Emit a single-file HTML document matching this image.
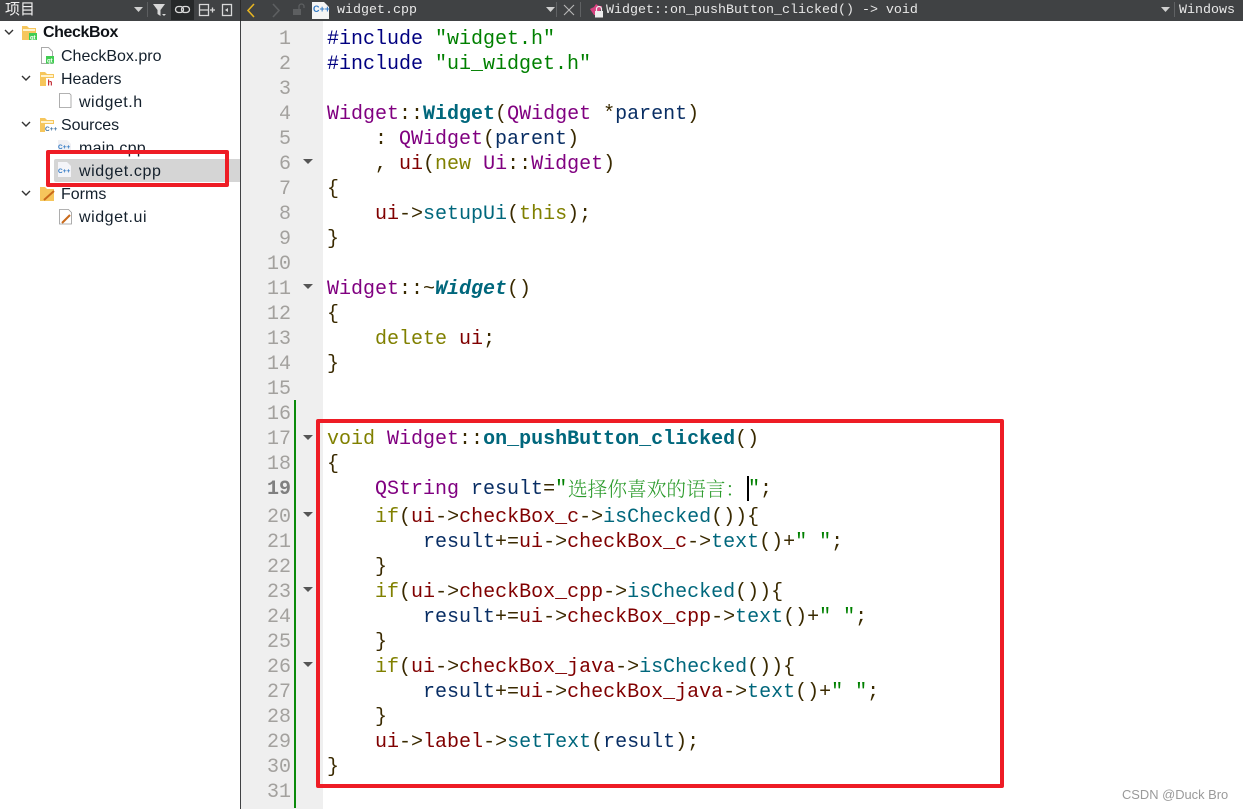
<!DOCTYPE html>
<html><head><meta charset="utf-8">
<style>
html,body{margin:0;padding:0;width:1243px;height:809px;overflow:hidden;background:#fff}
#r{position:relative;width:1243px;height:809px;overflow:hidden}
.a{position:absolute}
.t{position:absolute;font:16px/22px "Liberation Sans","Noto Sans CJK SC",sans-serif;color:#14202c;white-space:pre;margin-top:3px}
.h{position:absolute;font:13.33px/21px "Liberation Mono",monospace;color:#e8e8e8;white-space:pre;top:0}
.n{position:absolute;left:250px;width:41px;text-align:right;font:20px/25px "Liberation Mono",monospace;color:#a3a19e;margin-top:1px}
.c{position:absolute;left:327px;font:20px/25px "Liberation Mono","Noto Sans CJK SC",monospace;color:#3a2a00;white-space:pre;margin-top:1px}
.k{color:#808000}.p{color:#800080}.f{color:#00677c}.b{font-weight:bold}.s{color:#008000}.d{color:#000080}.v{color:#092e64}.m{color:#800000}
.fold{position:absolute;left:303px;width:0;height:0;border-left:5px solid transparent;border-right:5px solid transparent;border-top:5px solid #555}
svg{position:absolute;overflow:visible}
</style></head><body><div id="r">
<div class="a" style="left:0;top:0;width:1243px;height:21px;background:#404244"></div>
<div class="a" style="left:171px;top:0;width:23px;height:20px;background:#262829"></div>
<div class="a" style="left:147px;top:2px;width:1px;height:15px;background:#5c5e60"></div>
<div class="a" style="left:240px;top:0;width:1px;height:21px;background:#2a2a2a"></div>
<div class="a" style="left:556px;top:2px;width:1px;height:15px;background:#606264"></div>
<div class="a" style="left:580px;top:2px;width:1px;height:15px;background:#606264"></div>
<div class="a" style="left:1174px;top:2px;width:1px;height:15px;background:#606264"></div>
<div class="t" style="left:5px;top:-1px;margin-top:0;color:#f0f0f0;font-size:15px;line-height:21px">项目</div>
<svg style="left:0;top:0" width="1243" height="21">
<path d="M134 7h9l-4.500 5z" fill="#d0d0d0"/>
<path d="M153 4h12l-4.500 6v6l-3-2v-4z" fill="#d8d8d8"/><path d="M162 14h4l-2 2z" fill="#d8d8d8"/>
<g fill="none" stroke="#d8d8d8" stroke-width="1.300"><rect x="175.500" y="6.500" width="8" height="6" rx="3"/><rect x="181.500" y="6.500" width="8" height="6" rx="3"/>
<path d="M199.500 4.500h9v11h-9zM199.500 10h9M210 10h5M212.500 7.500v5"/><rect x="222.500" y="4.500" width="9" height="11"/></g>
<path d="M228 8l-3 2 3 2z" fill="#d8d8d8"/>
<path d="M254 4l-6 6.500 6 6.500" fill="none" stroke="#e6b422" stroke-width="1.600"/>
<path d="M273 4l6 6.500-6 6.500" fill="none" stroke="#5d5f61" stroke-width="1.600"/>
<rect x="293" y="9" width="8" height="6" fill="#5d5f61"/><path d="M299 9V6.500a2.500 2.500 0 0 1 5 0V8" fill="none" stroke="#5d5f61" stroke-width="1.300"/>
<path d="M312 2h12l5 5v12h-17z" fill="#f4f4f4"/>
<path d="M546 7h9l-4.500 5z" fill="#d0d0d0"/>
<path d="M564 5l10 10M574 5l-10 10" stroke="#b8b8b8" stroke-width="1.100"/>
<path d="M590 9l4-2 2-3 3 2 3 0-1 3-4 6-3 0z" fill="#d6417f"/>
<rect x="595" y="11" width="8" height="6.500" fill="#eee"/><path d="M596.500 11V9a2.500 2.500 0 0 1 5 0v2" fill="none" stroke="#eee" stroke-width="1.200"/>
<path d="M1161 7h9l-4.500 5z" fill="#d0d0d0"/>
</svg>
<div class="t" style="left:313px;top:-2px;font:bold 9px/17px 'Liberation Sans',sans-serif;color:#2f78c4">C++</div>
<div class="h" style="left:337px">widget.cpp</div>
<div class="h" style="left:606px">Widget::on_pushButton_clicked() -&gt; void</div>
<div class="h" style="left:1179px">Windows</div>

<!-- Sidebar -->
<div class="a" style="left:240px;top:21px;width:1px;height:788px;background:#404244"></div>
<svg style="left:0;top:0" width="240" height="240">
<g fill="none" stroke="#333" stroke-width="1.400"><path d="M5 30l4 4 4-4M22 76l4 4 4-4M22 122l4 4 4-4M22 191l4 4 4-4"/></g>
<path d="M22 26h5l2 2h7v12H22z" fill="#f6c65c"/><rect x="23" y="29" width="12" height="2" fill="#fff3cf"/>
<rect x="29" y="33" width="8" height="7" fill="#41cd52"/><text x="30" y="39.500" font-family="Liberation Sans" font-size="6" font-weight="bold" fill="#fff">qt</text>
<path d="M41.500 47.500h7l4 4v12h-11z" fill="#fff" stroke="#aaa"/><rect x="46" y="56" width="8" height="7.500" fill="#41cd52"/><text x="47" y="62.500" font-family="Liberation Sans" font-size="6" font-weight="bold" fill="#fff">qt</text>
<path d="M40 72h5l2 2h7v12H40z" fill="#f6c65c"/><rect x="41" y="75" width="12" height="2" fill="#fff3cf"/><rect x="46" y="78" width="8" height="8" fill="#fff"/><text x="47.500" y="85.500" font-family="Liberation Sans" font-size="8" font-weight="bold" fill="#c0222a">h</text>
<path d="M59.500 93.500h10l1.500 1.500v12.500h-11.500z" fill="#fff" stroke="#999" stroke-width=".8"/>
<path d="M40 118h5l2 2h7v12H40z" fill="#f6c65c"/><rect x="41" y="121" width="12" height="2" fill="#fff3cf"/><rect x="45" y="124" width="9" height="8" fill="#fff"/><text x="45" y="131" font-family="Liberation Sans" font-size="6.500" font-weight="bold" fill="#3c6e9c">C++</text>
<path d="M58 140h9l4 4v10H58z" fill="#f0f0f4"/><text x="58" y="149" font-family="Liberation Sans" font-size="6.500" font-weight="bold" fill="#2f78c4">C++</text>
<path d="M40 187h5l2 2h7v12H40z" fill="#f6c65c"/><path d="M44 200l10-9" stroke="#c96a1b" stroke-width="2"/>
<path d="M59.500 209.500h9l3 3v11.500h-12z" fill="#fff" stroke="#999" stroke-width=".8"/><path d="M62 223l8-8" stroke="#c96a1b" stroke-width="2"/>
</svg>
<div class="t b" style="left:43px;top:19px;font-weight:bold;color:#0e1217;letter-spacing:-.4px">CheckBox</div>
<div class="t" style="left:61px;top:43px">CheckBox.pro</div>
<div class="t" style="left:61px;top:66px">Headers</div>
<div class="t" style="left:79px;top:89px;letter-spacing:.5px">widget.h</div>
<div class="t" style="left:61px;top:112px;letter-spacing:-.1px">Sources</div>
<div class="t" style="left:79px;top:135px;letter-spacing:.25px">main.cpp</div>
<div class="a" style="left:54px;top:159px;width:186px;height:23px;background:#d5d5d5;border-radius:2px 0 0 2px"></div>
<svg style="left:0;top:0" width="100" height="190"><path d="M58 162h9l4 4v11H58z" fill="#f4f4f8"/><text x="58" y="173" font-family="Liberation Sans" font-size="6.500" font-weight="bold" fill="#2f78c4">C++</text></svg>
<div class="t" style="left:79px;top:158px;letter-spacing:.6px">widget.cpp</div>
<div class="t" style="left:61px;top:181px">Forms</div>
<div class="t" style="left:79px;top:204px;letter-spacing:.55px">widget.ui</div>

<!-- Gutter -->
<div class="a" style="left:241px;top:21px;width:82px;height:788px;background:#efefef"></div>
<div class="a" style="left:294px;top:400px;width:2px;height:408px;background:#0a8a0a"></div>
<div class="fold" style="top:159px"></div><div class="fold" style="top:284px"></div><div class="fold" style="top:435px"></div><div class="fold" style="top:512px"></div><div class="fold" style="top:587px"></div><div class="fold" style="top:662px"></div>

<div class="n" style="top:26px">1</div><div class="n" style="top:51px">2</div><div class="n" style="top:76px">3</div><div class="n" style="top:101px">4</div><div class="n" style="top:126px">5</div><div class="n" style="top:151px">6</div><div class="n" style="top:176px">7</div><div class="n" style="top:201px">8</div><div class="n" style="top:226px">9</div><div class="n" style="top:251px">10</div><div class="n" style="top:276px">11</div><div class="n" style="top:301px">12</div><div class="n" style="top:326px">13</div><div class="n" style="top:351px">14</div><div class="n" style="top:376px">15</div><div class="n" style="top:401px">16</div><div class="n" style="top:426px">17</div><div class="n" style="top:451px">18</div><div class="n" style="top:476px;font-weight:bold;color:#808080">19</div><div class="n" style="top:504px">20</div><div class="n" style="top:529px">21</div><div class="n" style="top:554px">22</div><div class="n" style="top:579px">23</div><div class="n" style="top:604px">24</div><div class="n" style="top:629px">25</div><div class="n" style="top:654px">26</div><div class="n" style="top:679px">27</div><div class="n" style="top:704px">28</div><div class="n" style="top:729px">29</div><div class="n" style="top:754px">30</div><div class="n" style="top:779px">31</div>

<!-- Code -->
<div class="c d" style="top:26px">#include <span class="s">"widget.h"</span></div>
<div class="c d" style="top:51px">#include <span class="s">"ui_widget.h"</span></div>
<div class="c" style="top:101px"><span class="p">Widget</span>::<span class="f b">Widget</span>(<span class="p">QWidget</span> *<span class="v">parent</span>)</div>
<div class="c" style="top:126px">    : <span class="p">QWidget</span>(<span class="v">parent</span>)</div>
<div class="c" style="top:151px">    , <span class="m">ui</span>(<span class="k">new</span> <span class="p">Ui</span>::<span class="p">Widget</span>)</div>
<div class="c" style="top:176px">{</div>
<div class="c" style="top:201px">    <span class="m">ui</span>-&gt;<span class="f">setupUi</span>(<span class="k">this</span>);</div>
<div class="c" style="top:226px">}</div>
<div class="c" style="top:276px"><span class="p">Widget</span>::~<span class="f b" style="font-style:italic">Widget</span>()</div>
<div class="c" style="top:301px">{</div>
<div class="c" style="top:326px">    <span class="k">delete</span> <span class="m">ui</span>;</div>
<div class="c" style="top:351px">}</div>
<div class="c" style="top:426px"><span class="k">void</span> <span class="p">Widget</span>::<span class="f b">on_pushButton_clicked</span>()</div>
<div class="c" style="top:451px">{</div>
<div class="c" style="top:476px">    <span class="p">QString</span> <span class="v">result</span>=<span class="s">"</span></div>
<div class="a s" style="left:568px;top:475px;font:19.700px/25px 'Noto Serif CJK SC','Noto Sans CJK SC',serif;font-weight:300;color:#2a9a2a;white-space:pre">选择你喜欢的语言：</div>
<div class="c" style="left:748px;top:476px"><span class="s">"</span>;</div>
<div class="a" style="left:747px;top:476px;width:2px;height:25px;background:#000"></div>
<div class="c" style="top:504px">    <span class="k">if</span>(<span class="m">ui</span>-&gt;<span class="m">checkBox_c</span>-&gt;<span class="f">isChecked</span>()){</div>
<div class="c" style="top:529px">        <span class="v">result</span>+=<span class="m">ui</span>-&gt;<span class="m">checkBox_c</span>-&gt;<span class="f">text</span>()+<span class="s">" "</span>;</div>
<div class="c" style="top:554px">    }</div>
<div class="c" style="top:579px">    <span class="k">if</span>(<span class="m">ui</span>-&gt;<span class="m">checkBox_cpp</span>-&gt;<span class="f">isChecked</span>()){</div>
<div class="c" style="top:604px">        <span class="v">result</span>+=<span class="m">ui</span>-&gt;<span class="m">checkBox_cpp</span>-&gt;<span class="f">text</span>()+<span class="s">" "</span>;</div>
<div class="c" style="top:629px">    }</div>
<div class="c" style="top:654px">    <span class="k">if</span>(<span class="m">ui</span>-&gt;<span class="m">checkBox_java</span>-&gt;<span class="f">isChecked</span>()){</div>
<div class="c" style="top:679px">        <span class="v">result</span>+=<span class="m">ui</span>-&gt;<span class="m">checkBox_java</span>-&gt;<span class="f">text</span>()+<span class="s">" "</span>;</div>
<div class="c" style="top:704px">    }</div>
<div class="c" style="top:729px">    <span class="m">ui</span>-&gt;<span class="m">label</span>-&gt;<span class="f">setText</span>(<span class="v">result</span>);</div>
<div class="c" style="top:754px">}</div>

<!-- Red annotations -->
<div class="a" style="left:316px;top:419px;width:680px;height:361px;border:4px solid #ee1c25;border-radius:2px"></div>
<div class="a" style="left:46px;top:150px;width:175px;height:29px;border:4px solid #ee1c25;border-radius:2px"></div>
<div class="a" style="left:1122px;top:787px;font:12.900px/16px 'Liberation Sans',sans-serif;color:#9a9a9a;white-space:pre">CSDN @Duck Bro</div>
</div></body></html>
